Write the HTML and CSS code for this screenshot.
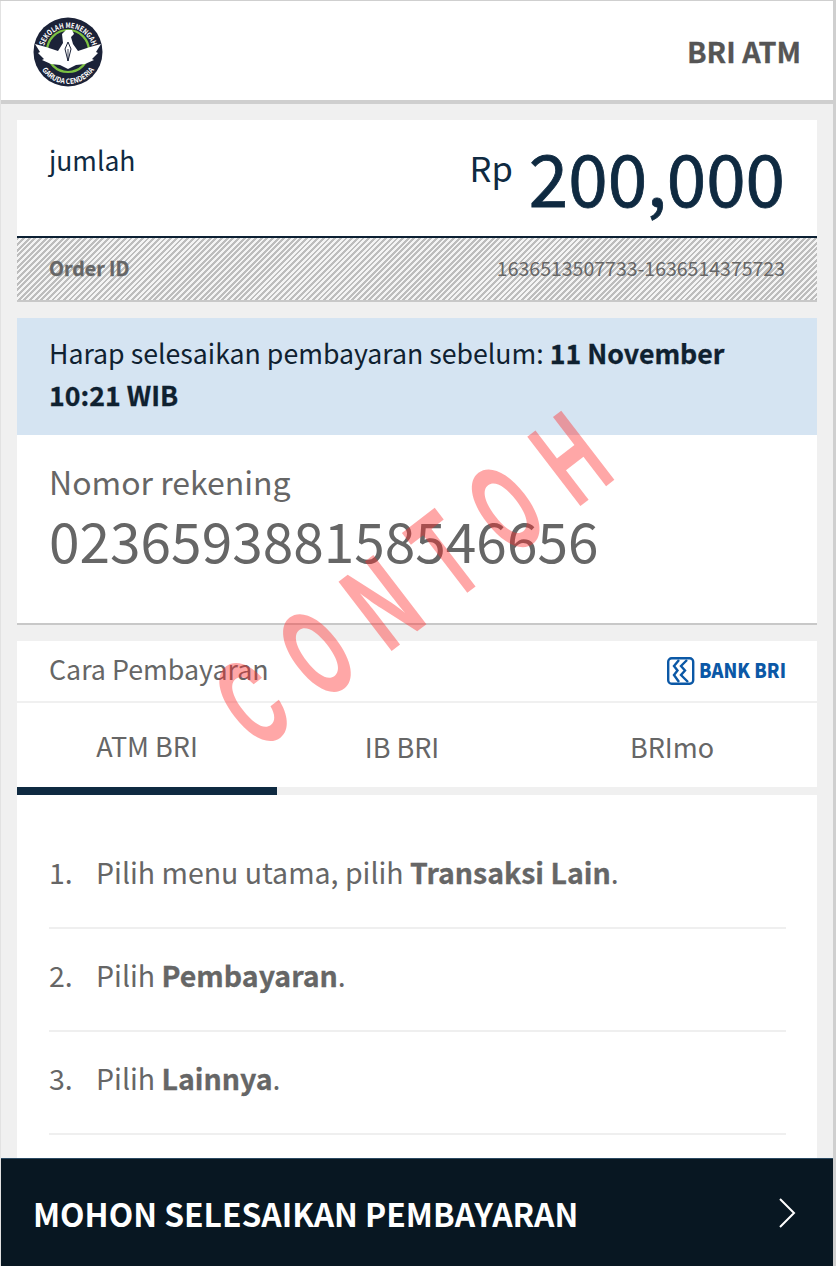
FILE: index.html
```html
<!DOCTYPE html>
<html lang="id">
<head>
<meta charset="utf-8">
<title>BRI ATM</title>
<link rel="stylesheet" href="styles.css">
</head>
<body>
<div class="frame">
  <header class="topbar">
    <svg class="school-logo" viewBox="0 0 70 70" width="70" height="70" aria-label="Logo">
      <defs>
        <path id="arcTop" d="M10 36 A25 25 0 0 1 60 36"/>
        <path id="arcBot" d="M4 36 A31 31 0 0 0 66 36"/>
      </defs>
      <circle cx="35" cy="35" r="34.5" fill="#1b2238"/>
      <circle cx="35" cy="34" r="21" fill="none" stroke="#7cc142" stroke-width="2.2"/>
      <text class="logo-text"><textPath href="#arcTop" startOffset="50%" text-anchor="middle" textLength="64" lengthAdjust="spacingAndGlyphs">SEKOLAH MENENGAH</textPath></text>
      <text class="logo-text"><textPath href="#arcBot" startOffset="50%" text-anchor="middle" textLength="62" lengthAdjust="spacingAndGlyphs">GARUDA CENDERIA</textPath></text>
      <path d="M2 27 L13 30 L25 34 L30 26 L29 17 L33 13 L39 13 L41 17 L38 20 L40 27 L45 34 L57 30 L68 27 L63 35 L65 36 L59 42 L61 43 L52 47 L43 48 L35 52 L27 48 L18 47 L9 43 L11 42 L5 36 L7 35 Z" fill="#fff"/>
      <path d="M35 25 L32 32 L35 44 L38 32 Z" fill="#fff" stroke="#1b2238" stroke-width="1"/>
      <path d="M35 32 V44" stroke="#1b2238" stroke-width="0.8"/>
    </svg>
    <div class="topbar-title">BRI ATM</div>
  </header>

  <main class="content">
    <section class="amount-card">
      <div class="amount-label">jumlah</div>
      <div class="amount-value"><span class="currency">Rp</span><span class="figure">200,000</span></div>
    </section>
    <section class="order-strip">
      <span class="order-label">Order ID</span>
      <span class="order-id">1636513507733-1636514375723</span>
    </section>

    <section class="deadline">Harap selesaikan pembayaran sebelum: <b>11 November 10:21 WIB</b></section>
    <section class="account">
      <div class="account-label">Nomor rekening</div>
      <div class="account-number">023659388158546656</div>
    </section>

    <section class="pay-head">
      <span class="pay-title">Cara Pembayaran</span>
      <svg class="bri-logo" viewBox="0 0 124 28" width="124" height="28" aria-label="Bank BRI">
        <rect x="1.2" y="1.2" width="25" height="25.6" rx="3.5" fill="#fff" stroke="#0b58a6" stroke-width="2.4"/>
        <path d="M12 3 L7 9 L10.5 13.5 L7 18 L12 25 M20 3 L14 9 L18 13.5 L14 18 L21 25" fill="none" stroke="#0b58a6" stroke-width="2.4"/>
        <text class="bri-text" x="32" y="21" textLength="87" lengthAdjust="spacingAndGlyphs">BANK BRI</text>
      </svg>
    </section>
    <nav class="tabs">
      <div class="tab tab-active">ATM BRI</div>
      <div class="tab">IB BRI</div>
      <div class="tab">BRImo</div>
    </nav>
    <ol class="steps">
      <li class="step"><span class="step-num">1.</span><span>Pilih menu utama, pilih <b>Transaksi Lain</b>.</span></li>
      <li class="step"><span class="step-num">2.</span><span>Pilih <b>Pembayaran</b>.</span></li>
      <li class="step"><span class="step-num">3.</span><span>Pilih <b>Lainnya</b>.</span></li>
    </ol>
  </main>

  <div class="watermark">CONTOH</div>

  <footer class="cta">
    <span>MOHON SELESAIKAN PEMBAYARAN</span>
    <svg class="chevron" viewBox="0 0 18 32" width="18" height="32"><path d="M2 2 L16 16 L2 30" fill="none" stroke="#fff" stroke-width="2"/></svg>
  </footer>
</div>
</body>
</html>
```
FILE: styles.css
```css
* { box-sizing: border-box; }
html, body { margin: 0; padding: 0; height: 100%; overflow: hidden; }
body {
  font-family: "Noto Sans CJK SC", "Noto Sans", sans-serif;
  background: #cfcfcf;
  color: #666;
}
.frame {
  position: relative;
  width: 833px;
  height: 1265px;
  margin-top: 1px;
  overflow: hidden;
  background: #f0f0f0;
  border-left: 1px solid #e2e2e2;
}
.topbar {
  height: 103px;
  background: #fff;
  border-bottom: 4px solid #cfcfcf;
  display: flex;
  align-items: center;
  justify-content: space-between;
  padding: 0 32px 0 32px;
}
.school-logo { display: block; margin-top: 2px; }
.logo-text { font-size: 7.4px; font-weight: 700; fill: #fff; }
.topbar-title { font-size: 28.8px; font-weight: 700; color: #555; -webkit-text-stroke: 0.3px #555; }
.content { padding: 16px 16px 0 16px; }
.amount-card {
  height: 118px;
  background: #fff;
  border-bottom: 2px solid #0c2033;
  display: flex;
  justify-content: space-between;
  padding: 20px 32px 0 32px;
  color: #0f2a41;
}
.amount-label { font-size: 26.5px; line-height: 40px; }
.amount-value { display: flex; align-items: flex-start; gap: 16px; margin-top: -2px; }
.currency { font-size: 34.5px; line-height: 58px; }
.figure { font-size: 71px; line-height: 76px; -webkit-text-stroke: 0.8px #0f2a41; }
.order-strip {
  height: 64px;
  background: repeating-linear-gradient(135deg, #bdbdbd 0 2px, #f4f4f4 2px 4px);
  border-bottom: 2px solid #c8c8c8;
  display: flex;
  justify-content: space-between;
  align-items: center;
  padding: 0 32px 4px 32px;
}
.order-label { font-size: 19.5px; font-weight: 700; color: #666; -webkit-text-stroke: 0.3px #666; }
.order-id { font-size: 19.5px; color: #666; }
.deadline {
  margin-top: 16px;
  height: 117px;
  background: #d5e4f2;
  padding: 14px 60px 0 32px;
  font-size: 26.7px;
  line-height: 42px;
  color: #0f2130;
}
.deadline b { font-weight: 700; -webkit-text-stroke: 0.3px #0f2130; }
.account {
  height: 190px;
  background: #fff;
  border-bottom: 2px solid #c8c8c8;
  padding: 23px 32px 0;
}
.account-label { font-size: 32px; line-height: 46px; }
.account-number { font-size: 55px; line-height: 72px; margin-top: -1px; }
.pay-head {
  margin-top: 16px;
  height: 62px;
  background: #fff;
  border-bottom: 2px solid #f0f0f0;
  display: flex;
  justify-content: space-between;
  align-items: center;
  padding: 0 26px 4px 32px;
}
.pay-title { font-size: 26.8px; margin-bottom: 1px; }
.bri-logo { flex: none; margin-top: 3px; }
.bri-text { font-size: 20px; font-weight: 900; fill: #0b58a6; }
.tabs {
  display: grid;
  grid-template-columns: 260px 250px 290px;
  height: 92px;
  background: #fff;
  border-bottom: 8px solid #f0f0f0;
}
.tab {
  display: flex;
  align-items: center;
  justify-content: center;
  font-size: 27px;
  height: 92px;
  padding-bottom: 6px;
}
.tab-active {
  border-bottom: 8px solid #0f2a41;
  padding-bottom: 0;
}
.steps {
  list-style: none;
  margin: 0;
  padding: 31px 31px 60px 32px;
  background: #fff;
}
.step {
  display: flex;
  height: 103px;
  align-items: center;
  padding-bottom: 11px;
  font-size: 28.5px;
  border-bottom: 2px solid #efefef;
}
.step-num { width: 47px; }
.step b { font-weight: 700; -webkit-text-stroke: 0.3px #666; }
.watermark {
  position: absolute;
  left: 411px;
  top: 580px;
  transform: translate(-50%, -50%) rotate(-37.5deg) scaleX(0.58);
  font-family: Inter, "Noto Sans", sans-serif;
  font-size: 120px;
  line-height: 1;
  font-weight: 700;
  letter-spacing: 50px;
  padding-left: 50px;
  color: rgba(255, 45, 45, 0.42);
  white-space: nowrap;
}
.cta {
  position: absolute;
  left: 0;
  right: 0;
  bottom: 0;
  height: 108px;
  background: #081722;
  color: #fff;
  border-top: 1px solid #2b4a63;
  display: flex;
  align-items: center;
  justify-content: space-between;
  padding: 1px 37px 0 32px;
  font-size: 31.8px;
  font-weight: 700;
}
```
